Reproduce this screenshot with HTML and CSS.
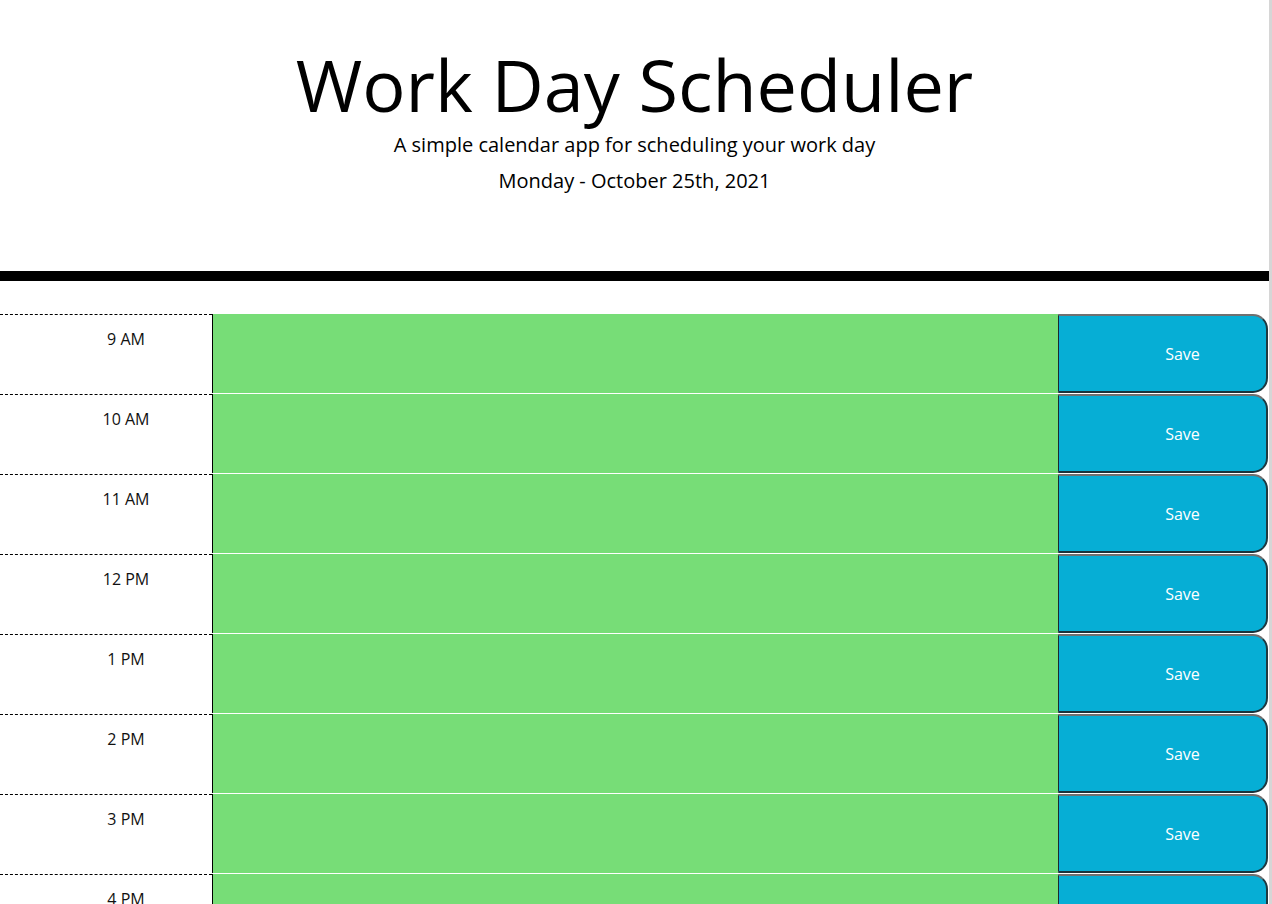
FILE: index.html
```html
<!DOCTYPE html>
<html lang="en">
<head>
    <meta charset="UTF-8">
    <meta name="viewport" content="width=device-width, initial-scale=1.0">
    <title>Work Day Scheduler</title>
    <link rel="stylesheet" href="styles.css">
</head>
<body>
    <header class="jumbotron">
        <h1 class="display-3">Work Day Scheduler</h1>
        <p class="lead">A simple calendar app for scheduling your work day</p>
        <p class="lead" id="currentDay">Monday - October 25th, 2021</p>
    </header>
    <div class="container">
        <div class="time-block">
            <div class="hour">9 AM</div>
            <textarea class="description future"></textarea>
            <button class="saveBtn">Save</button>
        </div>
        <div class="time-block">
            <div class="hour">10 AM</div>
            <textarea class="description future"></textarea>
            <button class="saveBtn">Save</button>
        </div>
        <div class="time-block">
            <div class="hour">11 AM</div>
            <textarea class="description future"></textarea>
            <button class="saveBtn">Save</button>
        </div>
        <div class="time-block">
            <div class="hour">12 PM</div>
            <textarea class="description future"></textarea>
            <button class="saveBtn">Save</button>
        </div>
        <div class="time-block">
            <div class="hour">1 PM</div>
            <textarea class="description future"></textarea>
            <button class="saveBtn">Save</button>
        </div>
        <div class="time-block">
            <div class="hour">2 PM</div>
            <textarea class="description future"></textarea>
            <button class="saveBtn">Save</button>
        </div>
        <div class="time-block">
            <div class="hour">3 PM</div>
            <textarea class="description future"></textarea>
            <button class="saveBtn">Save</button>
        </div>
        <div class="time-block">
            <div class="hour">4 PM</div>
            <textarea class="description future"></textarea>
            <button class="saveBtn">Save</button>
        </div>
        <div class="time-block">
            <div class="hour">5 PM</div>
            <textarea class="description future"></textarea>
            <button class="saveBtn">Save</button>
        </div>
    </div>
</body>
</html>
```

FILE: styles.css
```css
* {
    box-sizing: border-box;
}

body {
    font-family: 'Open Sans', sans-serif;
    font-size: 16px;
    line-height: 1;
    margin: 0;
    min-height: 100vh;
    background: #fff;
    border-right: 3px solid #d6d6d6;
}

.jumbotron {
    text-align: center;
    color: black;
    padding: 48px 32px 64px;
    border-bottom: 10px solid black;
    margin-bottom: 33px;
}

.jumbotron h1 {
    font-size: 72px;
    font-weight: 400;
    line-height: 1;
    margin: 0 0 15px;
}

.lead {
    font-size: 20px;
    font-weight: 400;
    margin: 0 0 16px;
}

.container {
    padding-right: 1px;
}

.time-block {
    display: flex;
    height: 80px;
}

.hour {
    width: 212px;
    flex-shrink: 0;
    padding: 16px 0 0 40px;
    text-align: center;
    color: #111;
    background-color: #fff;
    border-top: 1px dashed #000;
}

.description {
    flex: 1;
    height: 79px;
    margin: 0;
    padding: 10px;
    border: none;
    border-left: 1px solid black;
    resize: none;
    font-family: inherit;
    color: #000;
}

.future {
    background-color: #77dd77;
}

.past {
    background-color: #d3d3d3;
}

.present {
    background-color: #ff6961;
}

.saveBtn {
    width: 210px;
    flex-shrink: 0;
    height: 79px;
    margin: 0;
    padding: 0 0 0 40px;
    font-family: inherit;
    font-size: 16px;
    color: white;
    background-color: #06aed5;
    border-top: 2px solid #707070;
    border-left: 1px solid #1b2b30;
    border-right: 2px solid #1f3940;
    border-bottom: 2px solid #1a333a;
    border-top-right-radius: 15px;
    border-bottom-right-radius: 15px;
}
```
